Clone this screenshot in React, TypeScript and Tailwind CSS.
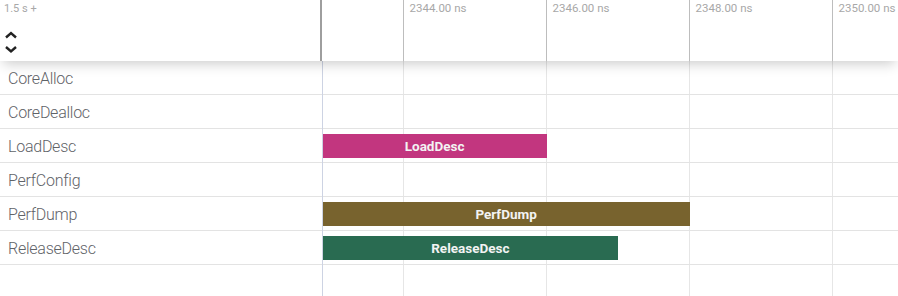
import React from 'react';

const rows = ['CoreAlloc', 'CoreDealloc', 'LoadDesc', 'PerfConfig', 'PerfDump', 'ReleaseDesc'];

// track starts at 2342.86 ns, 71.5 px per ns
const T0 = 2342.86;
const PX_PER_NS = 71.5;
const x = (ns: number) => (ns - T0) * PX_PER_NS;

const ticks = [2344, 2346, 2348, 2350];

const slices: Record<string, { start: number; end: number; color: string }> = {
  LoadDesc: { start: 2342.87, end: 2346.0, color: '#c2367f' },
  PerfDump: { start: 2342.87, end: 2348.0, color: '#78632e' },
  ReleaseDesc: { start: 2342.87, end: 2347.0, color: '#296b51' },
};

function Chevrons() {
  return (
    <svg width="14" height="26" viewBox="0 0 14 26">
      <path d="M2 8.5 L7 4 L12 8.5" fill="none" stroke="#222" strokeWidth="2.4" />
      <path d="M2 18 L7 22.5 L12 18" fill="none" stroke="#222" strokeWidth="2.4" />
    </svg>
  );
}

export default function App() {
  return (
    <div className="w-[898px] h-[296px] bg-white overflow-hidden flex flex-col font-['Roboto','Liberation_Sans',sans-serif]">
      {/* header */}
      <div className="relative z-10 flex h-[61px] shrink-0 bg-white shadow-[0_6px_12px_-3px_rgba(0,0,0,0.2)]">
        <div className="w-[322px] shrink-0 border-r-2 border-[#9e9e9e] pl-[4px] pt-[2px] flex flex-col">
          <span className="text-[11px] leading-[14px] text-[#a8a8a8]">1.5 s +</span>
          <div className="mt-[13px]">
            <Chevrons />
          </div>
        </div>
        <div className="relative flex-1">
          {ticks.map((t) => (
            <div key={t} className="absolute top-0 h-full border-l border-[#bdbdbd]" style={{ left: x(t) - 1 }}>
              <span className="absolute left-[6px] top-[1px] whitespace-nowrap text-[11.5px] leading-[14px] text-[#a8a8a8]">
                {t.toFixed(2)} ns
              </span>
            </div>
          ))}
        </div>
      </div>

      {/* body */}
      <div className="flex flex-1">
        <div className="w-[323px] shrink-0 border-r border-[#cdd3e3]">
          {rows.map((r) => (
            <div key={r} className="h-[34px] border-b border-[#e3e3e3] pl-[8px] pt-[2px] flex items-center text-[16px] tracking-[-0.25px] font-light text-[#5f6368]">
              {r}
            </div>
          ))}
        </div>
        <div className="relative flex-1">
          {ticks.map((t) => (
            <div key={t} className="absolute top-0 bottom-0 border-l border-[#e6e6e6]" style={{ left: x(t) - 2 }} />
          ))}
          {rows.map((r) => {
            const s = slices[r];
            return (
              <div key={r} className="relative h-[34px] border-b border-[#e3e3e3]">
                {s && (
                  <div
                    className="absolute top-[5px] h-[24px] flex items-center justify-center text-[13.5px] font-bold text-[#f3f3f3]"
                    style={{ left: x(s.start) - 1, width: x(s.end) - x(s.start), backgroundColor: s.color }}
                  >
                    {r}
                  </div>
                )}
              </div>
            );
          })}
        </div>
      </div>
    </div>
  );
}
